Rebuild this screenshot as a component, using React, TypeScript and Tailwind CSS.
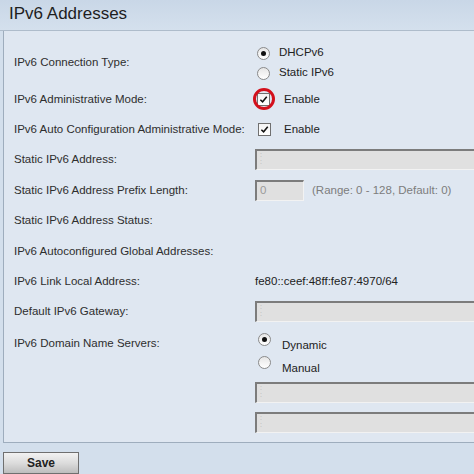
import { ReactNode } from "react";

const font = { fontFamily: '"Liberation Sans", Arial, sans-serif' };

function Radio({ checked }: { checked?: boolean }) {
    return (
        <span className="flex h-[13px] w-[13px] shrink-0 items-center justify-center rounded-full border border-[#8a8a8a] bg-gradient-to-b from-[#e6e6e6] to-white">
            {checked && <span className="h-[5px] w-[5px] rounded-full bg-[#111]" />}
        </span>
    );
}

function Checkbox({ circled }: { circled?: boolean }) {
    return (
        <span className="relative flex h-[13px] w-[13px] shrink-0 items-center justify-center border border-[#707070] bg-gradient-to-b from-[#f4f4f4] to-white">
            <svg viewBox="0 0 10 10" className="h-[9px] w-[9px]">
                <path d="M1.5 5.2 L4 7.6 L8.6 2" fill="none" stroke="#111" strokeWidth="1.7" />
            </svg>
            {circled && (
                <span className="absolute left-1/2 top-1/2 h-[22px] w-[22px] -translate-x-1/2 -translate-y-1/2 rounded-full border-[3px] border-[#d3101c]" />
            )}
        </span>
    );
}

function Field({ width, value }: { width?: string; value?: string }) {
    return (
        <div className={`h-[21px] ${width ?? "w-[240px]"} border-l-2 border-t-2 border-b border-r border-l-[#7c7c7c] border-t-[#7c7c7c] border-b-[#f2f2f2] border-r-[#f2f2f2] bg-[#e0e0e0] pl-[3px]`}>
            {value ? (
                <span className="text-[11.5px] leading-[17px] text-[#9a9a9a]">{value}</span>
            ) : (
                <span className="block text-[7px] leading-[7px] text-[#b0b0b0]">:<br />:</span>
            )}
        </div>
    );
}

function Row({ label, children, h = "h-[30.4px]", top }: { label: string; children?: ReactNode; h?: string; top?: boolean }) {
    return (
        <div className={`grid grid-cols-[241px_1fr] ${h} ${top ? "items-start" : "items-center"}`}>
            <div className={`text-[11.5px] text-[#2e2e2e] ${top ? "pt-[8px]" : ""}`}>{label}</div>
            <div className="flex min-w-0 items-center">{children}</div>
        </div>
    );
}

export default function App() {
    return (
        <div style={font} className="h-[474px] w-[474px] overflow-hidden bg-[#d3dfec]">
            <div className="h-[31px] border-b border-[#aebccb] bg-gradient-to-b from-[#c9d7e7] to-[#d4e0ed] pl-[9px] pt-[3px] text-[17px] leading-[22px] text-[#1e1e1e]">
                IPv6 Addresses
            </div>
            <div className="ml-[3px] w-[500px] border border-t-0 border-[#9eadbd] bg-[#dfe7f1] pb-[9px] pl-[10px] pt-[11px] text-[11.5px]">
                <Row label="IPv6 Connection Type:" h="h-[42px]">
                    <div className="flex flex-col">
                        <label className="flex h-[20px] items-center">
                            <span className="ml-[2px]"><Radio checked /></span>
                            <span className="ml-[9px] text-[#222]">DHCPv6</span>
                        </label>
                        <label className="flex h-[20px] items-center">
                            <span className="ml-[2px]"><Radio /></span>
                            <span className="ml-[9px] text-[#222]">Static IPv6</span>
                        </label>
                    </div>
                </Row>
                <Row label="IPv6 Administrative Mode:">
                    <span className="ml-[2px]"><Checkbox circled /></span>
                    <span className="ml-[14px] mt-[1px] text-[#222]">Enable</span>
                </Row>
                <Row label="IPv6 Auto Configuration Administrative Mode:">
                    <span className="ml-[3px]"><Checkbox /></span>
                    <span className="ml-[13px] mt-[1px] text-[#222]">Enable</span>
                </Row>
                <Row label="Static IPv6 Address:">
                    <Field />
                </Row>
                <Row label="Static IPv6 Address Prefix Length:">
                    <Field width="w-[49px]" value="0" />
                    <span className="ml-[8px] text-[#7d7d7d]">(Range: 0 - 128, Default: 0)</span>
                </Row>
                <Row label="Static IPv6 Address Status:" />
                <Row label="IPv6 Autoconfigured Global Addresses:" />
                <Row label="IPv6 Link Local Address:">
                    <span className="text-[#222]">fe80::ceef:48ff:fe87:4970/64</span>
                </Row>
                <Row label="Default IPv6 Gateway:">
                    <Field />
                </Row>
                <Row label="IPv6 Domain Name Servers:" h="h-auto" top>
                    <div className="flex flex-col">
                        <label className="flex h-[23px] items-start pt-[6px]">
                            <span className="ml-[3px]"><Radio checked /></span>
                            <span className="ml-[11px] mt-[4px] text-[#222]">Dynamic</span>
                        </label>
                        <label className="flex h-[23px] items-start pt-[6px]">
                            <span className="ml-[3px]"><Radio /></span>
                            <span className="ml-[11px] mt-[4px] text-[#222]">Manual</span>
                        </label>
                        <div className="mt-[9px] flex flex-col gap-[9px]">
                            <Field />
                            <Field />
                        </div>
                    </div>
                </Row>
            </div>
            <div className="ml-[3px] mt-[9px] flex h-[22px] w-[76px] items-center justify-center border border-[#6f6f6f] bg-gradient-to-b from-[#f2f2f2] via-[#dcdcdc] to-[#bdbdbd] text-[12px] font-bold text-[#222]">
                Save
            </div>
        </div>
    );
}
